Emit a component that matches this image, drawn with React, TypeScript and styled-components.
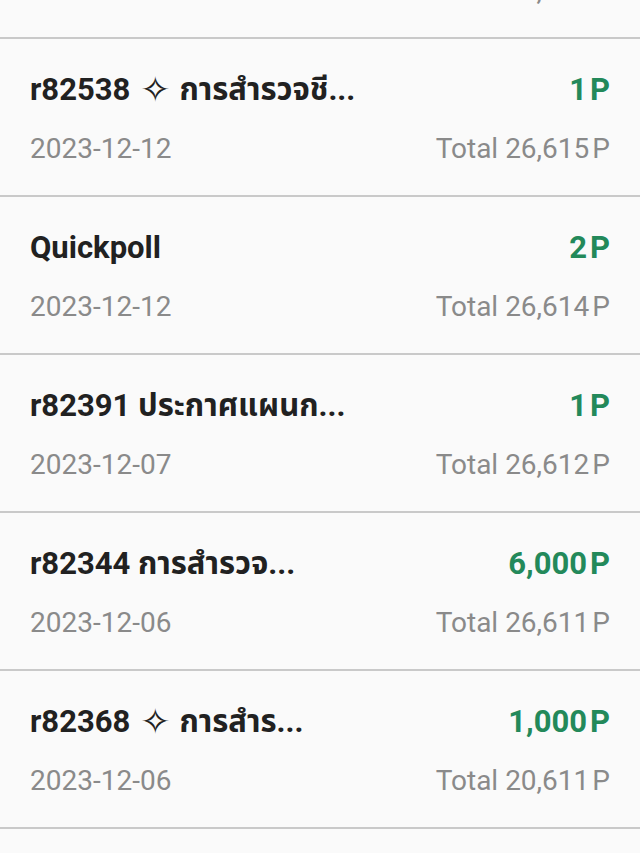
import {FC} from "react";
import styled, {createGlobalStyle} from "styled-components";

const Global = createGlobalStyle`
  html, body {
    margin: 0;
    padding: 0;
    background: #fafafa;
    overflow: hidden;
  }
  body {
    font-family: Roboto, "Noto Sans", "Noto Sans Thai", "DejaVu Sans", sans-serif;
  }
`;

const List = styled.div`
  display: flex;
  flex-direction: column;
  height: 853px;
  overflow: hidden;
`;

const Scroller = styled.div`
  display: flex;
  flex-direction: column;
  margin-top: -119px;
`;

const Row = styled.div`
  display: grid;
  grid-template-columns: 1fr auto;
  row-gap: 23px;
  column-gap: 16px;
  padding: 33px 30px 28px 30px;
  border-bottom: 2px solid #c9c9c9;
  font-size: 28px;
  line-height: 36px;
`;

const Title = styled.div`
  color: #212121;
  font-weight: 700;
  font-size: 31px;
  white-space: nowrap;
  overflow: hidden;
  display: flex;
  align-items: center;
`;

const Amount = styled.div`
  color: #23895a;
  font-weight: 700;
  font-size: 31px;
  text-align: right;
  white-space: nowrap;
`;

const Date = styled.div`
  color: #8a8a8a;
`;

const Total = styled.div`
  color: #8a8a8a;
  text-align: right;
  white-space: nowrap;
`;

const Unit = styled.span`
  margin-left: 3px;
`;

const Star = styled.span`
  font-family: "DejaVu Sans", sans-serif;
  font-weight: 400;
  font-size: 36px;
  margin: 0 9px 0 10px;
  line-height: 36px;
`;

declare type item = {
    title: string,
    star?: boolean,
    rest?: string,
    amount: string,
    date: string,
    total: string
}

const items: item[] = [
    {title: "r82601 การสำรวจ...", amount: "1", date: "2023-12-13", total: "26,616"},
    {title: "r82538", star: true, rest: "การสำรวจชี...", amount: "1", date: "2023-12-12", total: "26,615"},
    {title: "Quickpoll", amount: "2", date: "2023-12-12", total: "26,614"},
    {title: "r82391 ประกาศแผนก...", amount: "1", date: "2023-12-07", total: "26,612"},
    {title: "r82344 การสำรวจ...", amount: "6,000", date: "2023-12-06", total: "26,611"},
    {title: "r82368", star: true, rest: "การสำร...", amount: "1,000", date: "2023-12-06", total: "20,611"},
]

const App: FC = () => {
    return (
        <>
            <Global/>
            <List>
                <Scroller>
                    {items.map((it, i) => (
                        <Row key={i}>
                            <Title>
                                {it.title}
                                {it.star && <><Star>✧</Star>{it.rest}</>}
                            </Title>
                            <Amount>{it.amount}<Unit>P</Unit></Amount>
                            <Date>{it.date}</Date>
                            <Total>Total {it.total}<Unit>P</Unit></Total>
                        </Row>
                    ))}
                </Scroller>
            </List>
        </>
    )
};
export default App;
